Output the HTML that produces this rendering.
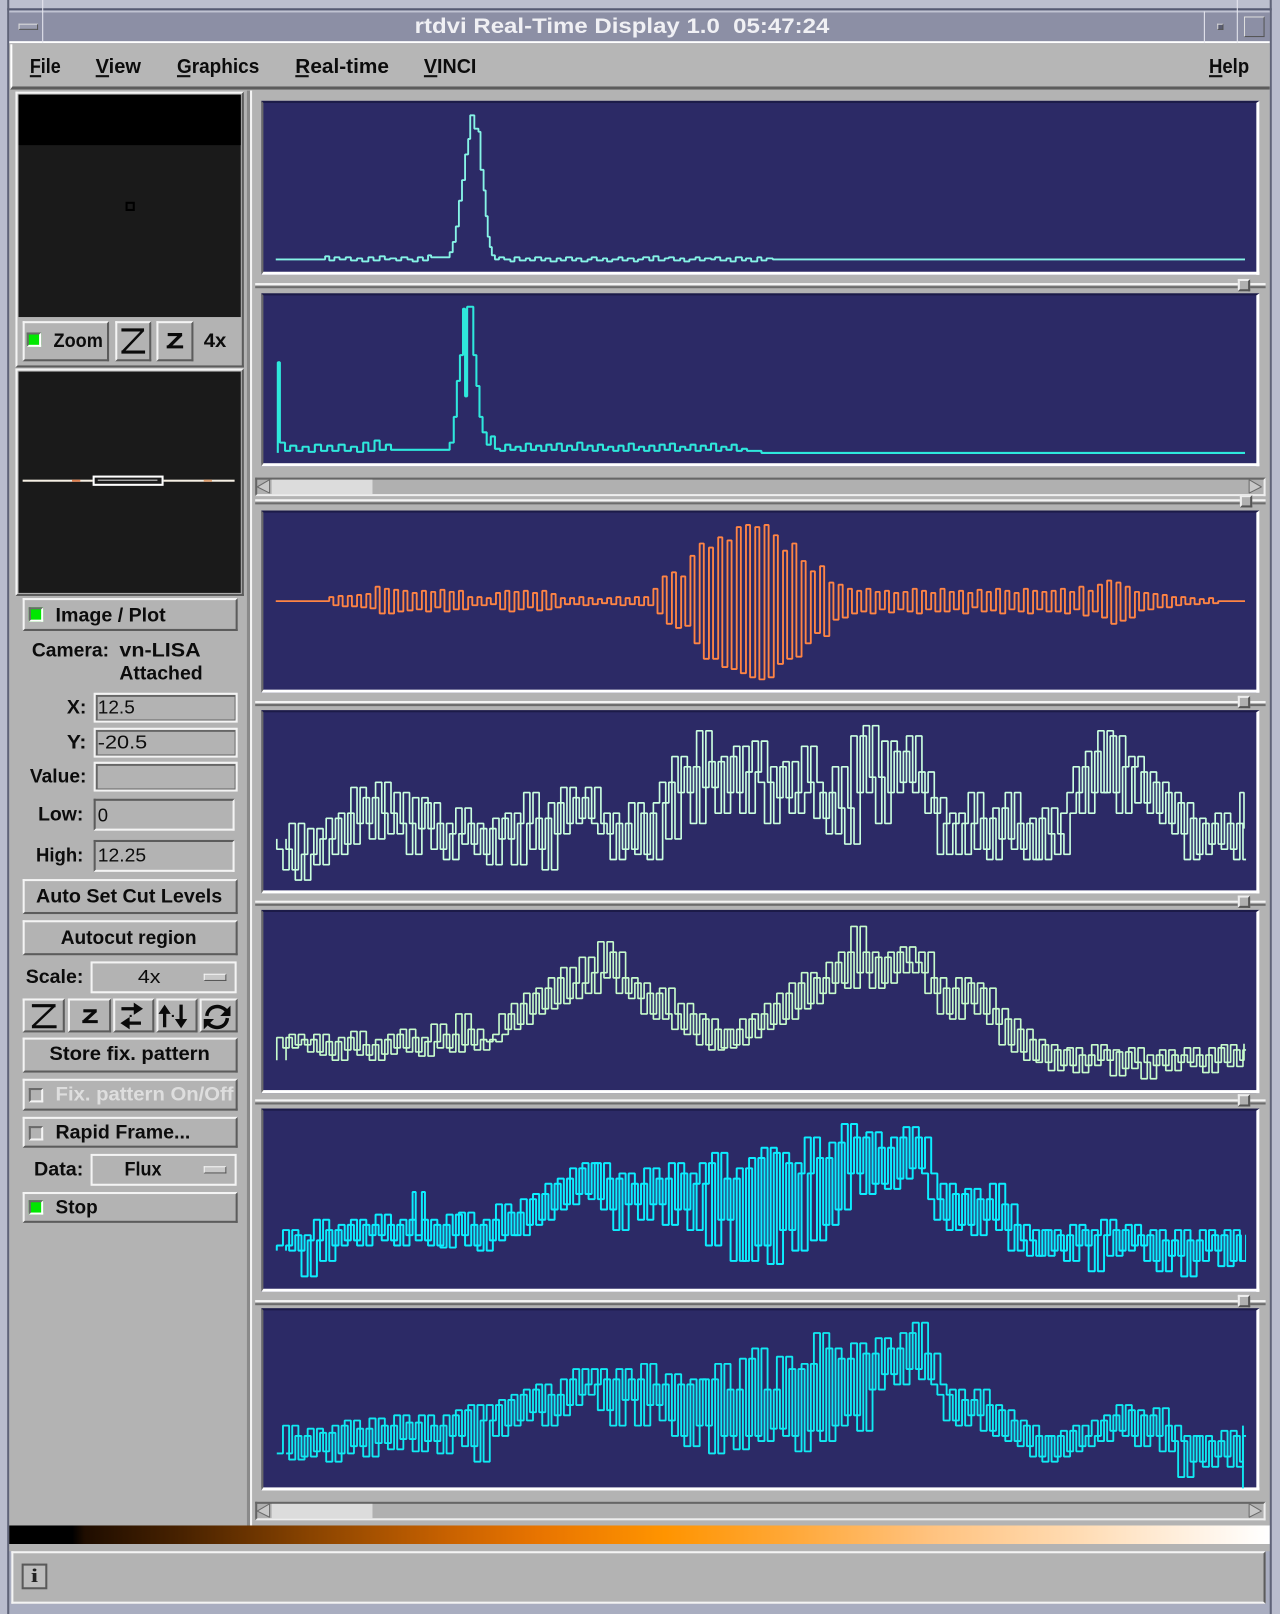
<!DOCTYPE html>
<html><head><meta charset="utf-8"><title>rtdvi Real-Time Display</title>
<style>
html,body{margin:0;padding:0;background:#a9adc0;width:1280px;height:1614px;overflow:hidden}
#w{position:absolute;left:0;top:0;width:1244px;height:1568px;transform:scale(1.02894,1.02934);transform-origin:0 0;background:#a9adc0;overflow:hidden;filter:blur(.3px)}
#w div{position:absolute;box-sizing:border-box}
.b{background:#b3b3b3;border:2px solid;border-color:#f4f4f4 #5c5c5c #5c5c5c #f4f4f4}
.s{background:#b3b3b3;border:2px solid;border-color:#5c5c5c #f4f4f4 #f4f4f4 #5c5c5c}
.f{background:#b3b3b3;border:2px solid;border-color:#f4f4f4;box-shadow:inset 2px 2px 0 #666,inset -1px -1px 0 #666}
.p{left:254px;width:970px;background:#2c2a66;border:solid;border-width:2px 3px 3px 2px;border-color:#1c1b48 #fff #fff #6a6a6a}
.h{left:248px;width:982px;height:5px;background:#b3b3b3;border-top:2px solid #f4f4f4;border-bottom:2px solid #6c6c6c}
.g{width:12px;height:12px;left:1203px;background:#b0b0b0;border:2px solid;border-color:#eee #555 #555 #eee}
.i{left:28px;width:14px;height:14px;background:#00e800;border:2px solid;border-color:#6a6a6a #fff #fff #6a6a6a}
.o{left:28px;width:14px;height:14px;background:#b3b3b3;border:2px solid;border-color:#6a6a6a #f4f4f4 #f4f4f4 #6a6a6a}
.m{width:22px;height:7px;left:198px;background:#c8c8c8;border:1px solid;border-color:#f4f4f4 #555 #555 #f4f4f4}
svg{position:absolute;left:0;top:0}
text{font-family:"Liberation Sans",sans-serif;font-weight:bold;font-size:19px;fill:#0c0c0c}
.r{font-weight:normal;font-size:18px}
path{fill:none;stroke-linejoin:bevel}
path.k{fill:#0a0a0a;stroke:none}
</style></head><body>
<div id="w">
<div style="left:0;top:0;width:1244px;height:10px;background:#bcbfce;border-bottom:2px solid #565a72"></div>
<div style="left:0;top:0;width:7px;height:1568px;background:#b9bccd"></div>
<div style="left:7px;top:0;width:2px;height:1568px;background:#5f6378"></div>
<div style="left:1236px;top:0;width:8px;height:1568px;background:#b9bccd"></div>
<div style="left:1234px;top:0;width:2px;height:1568px;background:#5f6378"></div>
<div style="left:9px;top:11px;width:1225px;height:31px;background:#8c8fa5;border-top:1px solid #d0d3e0;border-bottom:2px solid #fff"></div>
<div style="left:41px;top:0;width:1px;height:42px;background:#e8e8f0"></div>
<div style="left:1170px;top:11px;width:1px;height:31px;background:#e8e8f0"></div>
<div style="left:1202px;top:0;width:1px;height:42px;background:#e8e8f0"></div>
<div style="left:18px;top:23px;width:19px;height:6px;background:#9a9db0;border:1px solid;border-color:#ddd #555 #555 #ddd"></div>
<div style="left:1183px;top:23px;width:6px;height:6px;background:#5a5d72;border:1px solid;border-color:#ddd #555 #555 #ddd"></div>
<div style="left:1209px;top:16px;width:20px;height:20px;background:#8c8fa5;border:1px solid;border-color:#ddd #555 #555 #ddd"></div>
<div style="left:9px;top:42px;width:1225px;height:1440px;background:#b3b3b3"></div>
<div style="left:10px;top:43px;width:1224px;height:44px;background:#b6b6b6;border-bottom:3px solid #5c5c5c;border-left:2px solid #fff"></div>
<div style="left:240px;top:88px;width:3px;height:1394px;background:#8a8a8a"></div>
<div style="left:243px;top:88px;width:2px;height:1394px;background:#f4f4f4"></div>

<div style="left:15px;top:89px;width:222px;height:268px;background:#b3b3b3;border:2px solid;border-color:#f4f4f4 #5c5c5c #5c5c5c #f4f4f4"></div>
<div style="left:18px;top:92px;width:216px;height:216px;background:#1a1a1a"></div>
<div style="left:18px;top:92px;width:216px;height:49px;background:#000"></div>
<div style="left:122px;top:196px;width:9px;height:9px;border:2px solid #000"></div>
<div class="b" style="left:22px;top:312px;width:84px;height:39px"></div>
<div class="i" style="top:323px;left:26px"></div>
<div class="b" style="left:112px;top:312px;width:35px;height:39px"></div>
<div class="b" style="left:152px;top:312px;width:36px;height:39px"></div>

<div style="left:15px;top:358px;width:222px;height:221px;background:#b3b3b3;border:2px solid;border-color:#f4f4f4 #5c5c5c #5c5c5c #f4f4f4"></div>
<div style="left:18px;top:361px;width:216px;height:215px;background:#1a1a1a"></div>
<div style="left:22px;top:466px;width:206px;height:2px;background:#f6f0e4"></div>
<div style="left:70px;top:466px;width:8px;height:2px;background:#e08050"></div>
<div style="left:198px;top:466px;width:8px;height:2px;background:#e0a070"></div>
<div style="left:90px;top:462px;width:69px;height:10px;border:2px solid #fff;background:#1a1a1a"></div>
<div style="left:95px;top:466px;width:58px;height:1px;background:#ddd"></div>

<div class="b" style="left:22px;top:581px;width:209px;height:32px"></div><div class="i" style="top:590px"></div>
<div class="f" style="left:91px;top:673px;width:140px;height:29px"></div>
<div class="f" style="left:91px;top:707px;width:140px;height:29px"></div>
<div class="f" style="left:91px;top:740px;width:140px;height:29px"></div>
<div class="s" style="left:91px;top:776px;width:137px;height:31px"></div>
<div class="s" style="left:91px;top:816px;width:137px;height:31px"></div>
<div class="b" style="left:22px;top:854px;width:209px;height:34px"></div>
<div class="b" style="left:22px;top:894px;width:209px;height:34px"></div>
<div class="b" style="left:88px;top:934px;width:142px;height:31px;border-color:#f4f4f4"></div><div class="m" style="top:946px"></div>
<div class="b" style="left:22px;top:970px;width:41px;height:33px"></div>
<div class="b" style="left:66px;top:970px;width:42px;height:33px"></div>
<div class="b" style="left:110px;top:970px;width:40px;height:33px"></div>
<div class="b" style="left:152px;top:970px;width:40px;height:33px"></div>
<div class="b" style="left:194px;top:970px;width:37px;height:33px"></div>
<div class="b" style="left:22px;top:1008px;width:209px;height:34px"></div>
<div class="b" style="left:22px;top:1048px;width:209px;height:31px"></div><div class="o" style="top:1057px"></div>
<div class="b" style="left:22px;top:1085px;width:209px;height:30px"></div><div class="o" style="top:1094px"></div>
<div class="b" style="left:88px;top:1121px;width:142px;height:31px;border-color:#f4f4f4"></div><div class="m" style="top:1133px"></div>
<div class="b" style="left:22px;top:1158px;width:209px;height:30px"></div><div class="i" style="top:1166px"></div>

<div class="p" style="top:98px;height:169px"></div>
<div class="h" style="top:275px"></div><div class="g" style="top:271px"></div>
<div class="p" style="top:285px;height:168px"></div>
<div style="left:248px;top:464px;width:982px;height:18px;background:#b0b0b0;border:2px solid;border-color:#666 #eee #eee #666"></div>
<div style="left:264px;top:466px;width:98px;height:14px;background:#dcdcdc"></div>
<div class="h" style="top:485px"></div><div class="g" style="top:481px;left:1205px"></div>
<div class="p" style="top:496px;height:177px"></div>
<div class="h" style="top:681px"></div><div class="g" style="top:676px"></div>
<div class="p" style="top:690px;height:178px"></div>
<div class="h" style="top:875px"></div><div class="g" style="top:870px"></div>
<div class="p" style="top:884px;height:178px"></div>
<div class="h" style="top:1068px"></div><div class="g" style="top:1063px"></div>
<div class="p" style="top:1077px;height:178px"></div>
<div class="h" style="top:1263px"></div><div class="g" style="top:1258px"></div>
<div class="p" style="top:1271px;height:177px"></div>
<div style="left:248px;top:1459px;width:982px;height:18px;background:#b0b0b0;border:2px solid;border-color:#666 #eee #eee #666"></div>
<div style="left:264px;top:1461px;width:98px;height:14px;background:#dcdcdc"></div>

<div style="left:9px;top:1482px;width:1225px;height:18px;background:linear-gradient(90deg,#000 0,#000 5%,#1f0d00 6%,#4a2300 14%,#8a4400 24%,#c96200 35%,#e87400 42%,#ff9400 52%,#ffa838 62%,#ffc27e 73%,#ffdcb4 85%,#fff4e8 95%,#fff 100%)"></div>
<div style="left:9px;top:1500px;width:1225px;height:7px;background:#b3b3b3"></div>
<div style="left:11px;top:1507px;width:1219px;height:51px;background:#b3b3b3;border:2px solid;border-color:#f4f4f4 #5c5c5c #f4f4f4 #f4f4f4"></div>
<div style="left:21px;top:1519px;width:25px;height:25px;background:#bdbdbd;border:2px solid #5a5a5a"></div>

<svg width="1244" height="1568" viewBox="0 0 1244 1568">
<defs><clipPath id="c"><rect x="266" y="90" width="945" height="1360"/></clipPath></defs>
<text x="403" y="32" textLength="403" lengthAdjust="spacingAndGlyphs" style="font-size:21px;fill:#f0f0f4" xml:space="preserve">rtdvi Real-Time Display 1.0  05:47:24</text>
<text x="29" y="71" textLength="30" lengthAdjust="spacingAndGlyphs" style="font-size:20px">File</text>
<text x="93" y="71" textLength="44" lengthAdjust="spacingAndGlyphs" style="font-size:20px">View</text>
<text x="172" y="71" textLength="80" lengthAdjust="spacingAndGlyphs" style="font-size:20px">Graphics</text>
<text x="287" y="71" textLength="91" lengthAdjust="spacingAndGlyphs" style="font-size:20px">Real-time</text>
<text x="412" y="71" textLength="51" lengthAdjust="spacingAndGlyphs" style="font-size:20px">VINCI</text>
<text x="1175" y="71" textLength="39" lengthAdjust="spacingAndGlyphs" style="font-size:20px">Help</text>
<path d="M29 74h11M93 74h13M172 74h13M287 74h13M412 74h13M1175 74h13" stroke="#111" stroke-width="2"/>

<text x="52" y="337" textLength="48" lengthAdjust="spacingAndGlyphs">Zoom</text>
<text x="198" y="337" textLength="22" lengthAdjust="spacingAndGlyphs">4x</text>
<text x="54" y="604" textLength="107" lengthAdjust="spacingAndGlyphs">Image / Plot</text>
<text x="31" y="638" textLength="75" lengthAdjust="spacingAndGlyphs">Camera:</text>
<text x="116" y="638" textLength="79" lengthAdjust="spacingAndGlyphs">vn-LISA</text>
<text x="116" y="660" textLength="81" lengthAdjust="spacingAndGlyphs">Attached</text>
<text x="65" y="693" textLength="19" lengthAdjust="spacingAndGlyphs">X:</text>
<text x="65" y="727" textLength="19" lengthAdjust="spacingAndGlyphs">Y:</text>
<text x="29" y="760" textLength="55" lengthAdjust="spacingAndGlyphs">Value:</text>
<text x="37" y="797" textLength="44" lengthAdjust="spacingAndGlyphs">Low:</text>
<text x="35" y="837" textLength="46" lengthAdjust="spacingAndGlyphs">High:</text>
<text class="r" x="95" y="693" textLength="36" lengthAdjust="spacingAndGlyphs">12.5</text>
<text class="r" x="95" y="727" textLength="48" lengthAdjust="spacingAndGlyphs">-20.5</text>
<text class="r" x="95" y="798" textLength="10" lengthAdjust="spacingAndGlyphs">0</text>
<text class="r" x="95" y="837" textLength="47" lengthAdjust="spacingAndGlyphs">12.25</text>
<text x="35" y="877" textLength="181" lengthAdjust="spacingAndGlyphs">Auto Set Cut Levels</text>
<text x="59" y="917" textLength="132" lengthAdjust="spacingAndGlyphs">Autocut region</text>
<text x="25" y="955" textLength="56" lengthAdjust="spacingAndGlyphs">Scale:</text>
<text class="r" x="134" y="955" textLength="22" lengthAdjust="spacingAndGlyphs">4x</text>
<text x="48" y="1030" textLength="156" lengthAdjust="spacingAndGlyphs">Store fix. pattern</text>
<text x="54" y="1069" textLength="173" lengthAdjust="spacingAndGlyphs" style="fill:#dedede">Fix. pattern On/Off</text>
<text x="54" y="1106" textLength="131" lengthAdjust="spacingAndGlyphs">Rapid Frame...</text>
<text x="33" y="1142" textLength="48" lengthAdjust="spacingAndGlyphs">Data:</text>
<text x="121" y="1142" textLength="36" lengthAdjust="spacingAndGlyphs">Flux</text>
<text x="54" y="1179" textLength="41" lengthAdjust="spacingAndGlyphs">Stop</text>
<text x="30" y="1537" textLength="7" lengthAdjust="spacingAndGlyphs" style="font-size:18px;font-family:'Liberation Serif',serif;fill:#222">i</text>

<g stroke="#0a0a0a">
<path d="M118 320.5H140M118 342H141" stroke-width="3"/><path d="M139 321L119 342" stroke-width="2.4"/>
<path d="M163 325H177M162 337H178" stroke-width="3"/><path d="M176 325L164 337" stroke-width="3.2"/>
<path d="M31 977H54M31 997.5H55" stroke-width="3"/><path d="M53 977L32 997" stroke-width="2.4"/>
<path d="M81 982H94M80 992.5H95" stroke-width="3"/><path d="M93 982L82 992" stroke-width="3.2"/>
<path d="M118 980H131M137 994H124" stroke-width="3.2"/>
<path d="M160 998V984M176 976V990" stroke-width="3.2"/>
<path d="M201 987C202 977 214 975 220 982M221 989C220 999 208 1001 202 994" stroke-width="3.4"/>
</g>
<path class="k" d="M130 974L139 980L130 986ZM126 988L117 994L126 1000ZM160 976L154 985H166ZM176 999L170 990H182ZM224 977V987H214ZM198 1000V990H208Z"/>
<path class="k" d="M126 986h2v2h-2zM167 986h2v2h-2z"/>
<g stroke="#6a6a6a" stroke-width="1">
<path d="M262 466L250 473L262 479Z" style="fill:#c8c8c8"/><path d="M1214 466L1226 473L1214 479Z" style="fill:#c8c8c8"/>
<path d="M262 1461L250 1468L262 1474Z" style="fill:#c8c8c8"/><path d="M1214 1461L1226 1468L1214 1474Z" style="fill:#c8c8c8"/>
</g>

<path stroke="#86f4e6" stroke-width="1.8" d="M268 252H316V249h4V253h5V250h5V252h6V250h5V253h6V251h5V254h6V250h5V253h6V249h5V252h5V251h6V253h5V250h6V252h5V254h5V250h5V253h5V248h3V250H437V245H440V235H443V220H446V195H449V175H452V150H455V135H457V112H461V125H465V128H467V165H470V185H472V210H474V230H476V240H478V248H481V252h4V250h5V252h6V254h4V250h5V253h6V251h4V253h5V250h6V253h4V251h5V254h6V251h4V253h5V250h6V253h4V251h5V254h6V252h4V250h5V253h6V251h4V254h5V252h6V250h4V253h5V251h6V254h4V252h5V250h6V253h4V249h5V253h6V251h4V250h5V253h6V251h4V254h5V252h6V250h4V253h5V251h6V252h4V250h5V253h6V251h4V254h5V250h6V253h4V251h5V254h6V250h4V253h5V251h6V252H1210"/>
<path stroke="#2ee8dc" stroke-width="2" d="M270 440V352H272V430h5V438h5V433h6V438h6V434h6V439h6V432h6V438h6V433h5V438h6V432h6V438h6V434h6V439h6V430h5V438h6V428h5V437h6V432h5V437H437V430H441V405H444V370H447V345H450V300H452V385H454V298H460V345H463V375H466V405H469V420H473V432H477V424H481V436h5V438h5V432h5V437h5V434h5V438h5V431h5V437h5V433h5V438h5V432h5V437h5V431h5V438h5V433h5V437h5V430h5V437h5V433h5V438h5V432h5V437h5V434h5V438h5V433h5V438h5V431h5V437h5V434h5V438h5V433h5V438h5V432h5V437h5V431h5V438h5V434h5V437h5V432h5V438h5V433h5V437h5V431h5V438h5V434h5V437h5V432h5V438h5V436h5V438H740V440H1210"/>

<path stroke="#ff8444" stroke-width="1.8" d="M268 584H320V580h4V588h5V579h4V589h5V579h4V589h5V578h4V590h5V577h4V591h5V570h4V596h5V572h4V596h5V573h4V594h5V574h4V593h5V576h4V592h5V574h4V594h5V575h4V590h5V573h4V594h5V575h4V592h5V574h4V592h5V580h4V588h5V580h4V588h5V581h4V587h5V576h4V592h5V574h4V594h5V575h4V592h5V574h4V590h5V576h4V593h5V574h4V592h5V577h4V590h5V581h4V587h5V581h4V587h5V580h4V588h5V581h4V587h5V582h4V586h5V581h4V587h5V580h4V588h5V581h4V587h5V580h4V588h5V580h4V588h5V572h4V596h5V560h4V606h5V556h4V610h5V560h4V608h5V540h4V625h5V528h4V640h5V532h4V640h5V522h4V648h5V525h4V650h5V512h4V654h5V510h4V658h5V512h4V660h5V510h4V658h5V520h4V645h5V535h4V640h5V528h4V638h5V545h4V625h5V555h4V615h5V550h4V618h5V566h4V602h5V568h4V600h5V572h4V596h5V574h4V594h5V572h4V596h5V575h4V592h5V574h4V595h5V576h4V592h5V575h4V594h5V572h4V596h5V574h4V592h5V576h4V594h5V572h4V594h5V575h4V592h5V574h4V596h5V576h4V590h5V573h4V594h5V575h4V593h5V572h4V596h5V574h4V592h5V576h4V594h5V572h4V596h5V574h4V592h5V575h4V594h5V574h4V594h5V572h4V596h5V575h4V592h5V570h4V598h5V574h4V594h5V568h4V600h5V564h4V606h5V566h4V603h5V570h4V600h5V575h4V593h5V576h4V592h5V577h4V590h5V578h4V590h5V580h4V588h5V580h4V587h5V581h4V587h5V582h4V586h5V581h4V586h5V584H1210"/>

<g clip-path="url(#c)">
<path id="p4" stroke="#caffdf" stroke-width="1.6" d="M269 815V825h6V845h6V800h6V855h6V830h6V805h6V840h6V815h6V795h6V830h6V790h6V820h6V765h6V800h6V775h6V815h6V760h6V790h6V810h6V770h6V800h6V830h6V775h6V805h6V780h6V825h6V800h6V835h6V810h6V785h6V820h6V800h6V830h6V805h6V840h6V795h6V815h6V790h6V840h6V800h6V770h6V825h6V795h6V845h6V780h6V810h6V765h6V800h6V775h6V795h6V765h6V800h6V810h6V790h6V835h6V800h6V825h6V780h6V830h6V790h6V835h6V780h6V760h6V815h6V735h6V770h6V745h6V800h6V710h6V765h6V740h6V790h6V735h6V770h6V725h6V790h6V750h6V720h6V760h6V800h6V745h6V775h6V740h6V790h6V770h6V725h6V760h6V795h6V770h6V810h6V745h6V785h6V820h6V715h6V770h6V705h6V755h6V800h6V720h6V770h6V730h6V760h6V715h6V770h6V750h6V790h6V775h6V830h6V800h6V790h6V830h6V800h6V770h6V825h6V795h6V835h6V785h6V815h6V770h6V825h6V800h6V835h6V795h6V835h6V785h6V810h6V830h6V790h6V770h6V745h6V790h6V730h6V770h6V710h6V770h6V715h6V790h6V745h6V735h6V780h6V750h6V790h6V760h6V800h6V770h6V810h6V780h6V835h6V795h6V830h6V800h6V820h6V790h6V825h6V800h6V835h6V770h4V805"/>
<use href="#p4" transform="translate(9,0)"/>
<path id="p5" stroke="#c6fbcb" stroke-width="1.6" d="M269 1030V1008h6V1018h6V1005h6V1015h6V1010h6V1022h6V1005h6V1025h6V1012h6V1030h6V1008h6V1020h6V1002h6V1025h6V1015h6V1030h6V1010h6V1024h6V1005h6V1018h6V1000h6V1022h6V1008h6V1026h6V1012h6V995h6V1018h6V1005h6V1022h6V985h6V1015h6V1000h6V1020h6V1010h6V1012h6V1005h6V985h6V1000h6V975h6V995h6V965h6V985h6V960h6V980h6V950h6V975h6V940h6V970h6V955h6V930h6V965h6V945h6V915h6V950h6V925h6V965h6V950h6V970h6V955h6V985h6V965h6V990h6V960h6V985h6V1000h6V975h6V1005h6V985h6V1015h6V990h6V1020h6V1000h6V1018h6V1000h6V1015h6V990h6V1008h6V985h6V1000h6V975h6V995h6V965h6V990h6V955h6V980h6V945h6V975h6V950h6V965h6V935h6V955h6V925h6V960h6V900h6V945h6V925h6V960h6V930h6V955h6V925h6V945h6V920h6V935h6V945h6V925h6V965h6V950h6V985h6V960h6V990h6V950h6V975h6V955h6V985h6V960h6V995h6V980h6V1015h6V990h6V1022h6V1000h6V1030h6V1010h6V1032h6V1015h6V1040h6V1020h6V1035h6V1018h6V1042h6V1025h6V1035h6V1015h6V1030h6V1020h6V1045h6V1022h6V1038h6V1018h6V1032h6V1048h6V1025h6V1035h6V1020h6V1040h6V1025h6V1032h6V1018h6V1036h6V1025h6V1042h6V1018h6V1032h6V1015h6V1036h6V1020h6V1030h4V1014"/>
<use href="#p5" transform="translate(9,0)"/>
<path id="p6" stroke="#0ceeff" stroke-width="1.9" d="M269 1215V1210h6V1195h6V1215h6V1200h6V1240h6V1205h6V1185h6V1225h6V1195h6V1210h6V1190h6V1205h6V1185h6V1210h6V1190h6V1200h6V1180h6V1205h6V1190h6V1210h6V1185h6V1200h6V1158h3V1205h6V1185h6V1210h6V1190h6V1212h6V1180h6V1200h6V1178h6V1210h6V1190h6V1215h6V1185h6V1205h6V1170h6V1200h6V1178h6V1200h6V1165h6V1190h6V1160h6V1185h6V1150h6V1175h6V1145h6V1170h6V1135h6V1160h6V1130h6V1165h6V1130h6V1175h6V1145h6V1195h6V1140h6V1170h6V1150h6V1185h6V1135h6V1170h6V1145h6V1190h6V1130h6V1175h6V1140h6V1195h6V1150h6V1130h6V1210h6V1120h6V1185h6V1145h6V1225h6V1135h6V1225h6V1125h6V1210h6V1115h6V1228h6V1120h6V1195h6V1130h6V1215h6V1140h6V1105h6V1205h6V1125h6V1190h6V1110h6V1175h6V1092h6V1140h6V1105h6V1160h6V1100h6V1150h6V1115h6V1155h6V1105h6V1145h6V1095h6V1135h6V1105h6V1140h6V1165h6V1185h6V1150h6V1195h6V1160h6V1190h6V1155h6V1200h6V1165h6V1185h6V1150h6V1195h6V1170h6V1215h6V1190h6V1205h6V1220h6V1195h6V1220h6V1195h6V1215h6V1200h6V1225h6V1190h6V1210h6V1195h6V1235h6V1200h6V1185h6V1220h6V1195h6V1215h6V1190h6V1210h6V1200h6V1225h6V1195h6V1235h6V1205h6V1220h6V1195h6V1240h6V1205h6V1225h6V1195h6V1215h6V1200h6V1230h6V1195h6V1225h6V1200h4V1225"/>
<use href="#p6" transform="translate(9,0)"/>
<path id="p7" stroke="#10eaf2" stroke-width="1.8" d="M269 1412V1412h6V1385h6V1418h6V1395h6V1415h6V1388h6V1410h6V1392h6V1420h6V1385h6V1412h6V1380h6V1405h6V1388h6V1415h6V1378h6V1402h6V1385h6V1408h6V1375h6V1398h6V1382h6V1410h6V1375h6V1400h6V1385h6V1412h6V1375h6V1395h6V1370h6V1405h6V1365h6V1420h6V1380h6V1365h6V1395h6V1360h6V1385h6V1355h6V1380h6V1350h6V1372h6V1345h6V1385h6V1355h6V1375h6V1340h6V1365h6V1330h6V1355h6V1345h6V1330h6V1370h6V1340h6V1385h6V1330h6V1360h6V1340h6V1385h6V1325h6V1365h6V1345h6V1380h6V1335h6V1395h6V1345h6V1405h6V1340h6V1385h6V1340h6V1412h6V1325h6V1395h6V1350h6V1408h6V1320h6V1395h6V1310h6V1400h6V1350h6V1388h6V1318h6V1395h6V1330h6V1410h6V1325h6V1390h6V1295h6V1400h6V1310h6V1385h6V1320h6V1375h6V1305h6V1390h6V1315h6V1350h6V1300h6V1335h6V1310h6V1345h6V1295h6V1330h6V1285h6V1340h6V1315h6V1345h6V1355h6V1380h6V1350h6V1385h6V1360h6V1375h6V1350h6V1390h6V1365h6V1395h6V1370h6V1400h6V1380h6V1405h6V1385h6V1415h6V1395h6V1420h6V1395h6V1415h6V1390h6V1410h6V1385h6V1405h6V1395h6V1380h6V1400h6V1375h6V1390h6V1365h6V1395h6V1370h6V1405h6V1375h6V1395h6V1368h6V1410h6V1385h6V1400h6V1435h6V1395h6V1420h6V1395h6V1425h6V1400h6V1415h6V1390h6V1425h6V1395h6V1420h3V1385V1446"/>
<use href="#p7" transform="translate(9,0)"/>
</g>
</svg>
</div>
</body></html>
